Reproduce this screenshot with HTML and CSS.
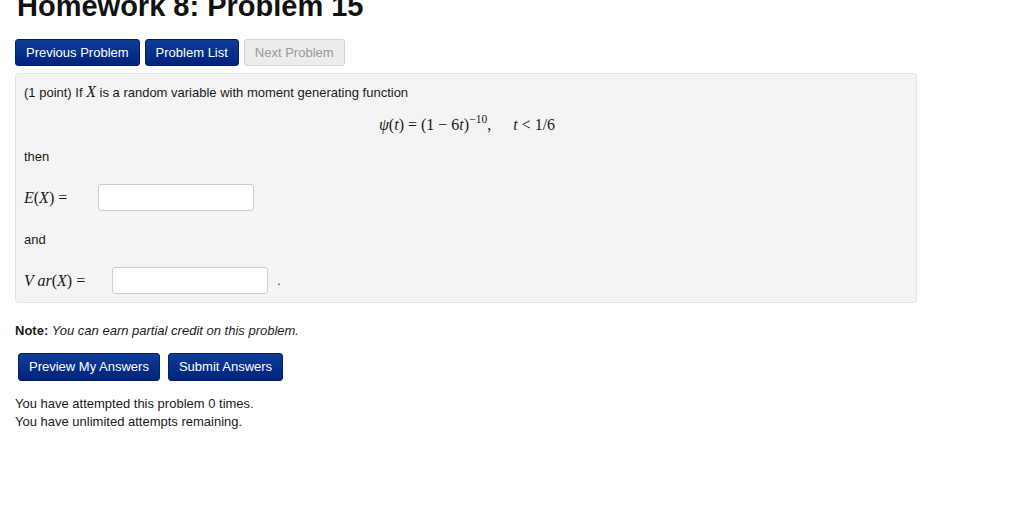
FILE: index.html
```html
<!DOCTYPE html>
<html lang="en">
<head>
<meta charset="utf-8">
<title>Homework 8: Problem 15</title>
<link rel="stylesheet" href="styles.css">
</head>
<body>
<div class="page">
  <h1 class="title">Homework 8: Problem 15</h1>
  <div class="nav">
    <button class="btn btn-primary">Previous Problem</button>
    <button class="btn btn-primary">Problem List</button>
    <button class="btn btn-disabled">Next Problem</button>
  </div>
  <div class="problem">
    <p class="line">(1 point) If <span class="m mi">X</span> is a random variable with moment generating function</p>
    <div class="display m"><span class="mi">ψ</span>(<span class="mi">t</span>)<span class="op">=</span>(1<span class="op">−</span>6<span class="mi">t</span>)<sup>−10</sup>,<span class="sp"></span><span class="mi">t</span><span class="op">&lt;</span>1/6</div>
    <p class="line then">then</p>
    <div class="ans-row">
      <span class="m label label-e"><span class="mi">E</span>(<span class="mi">X</span>)<span class="op">=</span></span>
      <input class="ans" type="text">
    </div>
    <p class="line and">and</p>
    <div class="ans-row">
      <span class="m label label-v"><span class="mi">V ar</span>(<span class="mi">X</span>)<span class="op">=</span></span>
      <input class="ans" type="text">
      <span class="dot">.</span>
    </div>
  </div>
  <p class="note"><b>Note:</b> <i>You can earn partial credit on this problem.</i></p>
  <div class="submit">
    <button class="btn btn-primary btn-lg">Preview My Answers</button>
    <button class="btn btn-primary btn-lg">Submit Answers</button>
  </div>
  <p class="info">You have attempted this problem 0 times.<br>You have unlimited attempts remaining.</p>
</div>
</body>
</html>
```
FILE: styles.css
```css
html, body {
  margin: 0;
  padding: 0;
  background: #fff;
}
body {
  font-family: "Liberation Sans", Arial, Helvetica, sans-serif;
  font-size: 13px;
  color: #1a1a1a;
  overflow: hidden;
}
.page {
  padding-left: 15px;
}
.title {
  margin: -10px 0 0 2px;
  font-size: 29px;
  line-height: 32px;
  font-weight: bold;
  color: #111;
}
.nav {
  display: flex;
  gap: 5px;
  margin-top: 17px;
}
.btn {
  font-family: "Liberation Sans", Arial, Helvetica, sans-serif;
  font-size: 13px;
  height: 27px;
  padding: 0 10px;
  border-radius: 3px;
  border: 1px solid #001e6b;
  line-height: 25px;
  cursor: pointer;
}
.btn-primary {
  color: #fff;
  background: linear-gradient(to bottom, #0d3d98, #00237c);
}
.btn-disabled {
  color: #999;
  background: #ececec;
  border-color: #d4d4d4;
}
.problem {
  margin-top: 7px;
  width: 884px;
  border: 1px solid #e3e3e3;
  border-radius: 3px;
  background: #f4f4f4;
  padding: 9px 8px 8px 8px;
  display: flex;
  flex-direction: column;
}
.line {
  margin: 0;
  line-height: 18px;
}
.m {
  font-family: "Liberation Serif", "Times New Roman", serif;
  font-size: 16px;
}
.mi {
  font-style: italic;
}
.op {
  margin: 0 4px;
}
.display {
  margin-top: 11px;
  text-align: center;
  line-height: 24px;
  padding-left: 2px;
}
.display sup {
  font-size: 11.5px;
  vertical-align: 0;
  position: relative;
  top: -7px;
}
.sp {
  display: inline-block;
  width: 22px;
}
.then {
  margin-top: 10px;
}
.ans-row {
  display: flex;
  align-items: center;
  margin-top: 18px;
  height: 27px;
}
.label {
  flex: none;
}
.label-e {
  width: 74px;
}
.label-v {
  width: 88px;
}
.ans {
  width: 156px;
  height: 27px;
  box-sizing: border-box;
  border: 1px solid #cfcfcf;
  border-radius: 3px;
  background: #fff;
  margin: 0;
  padding: 2px 6px;
}
.dot {
  margin-left: 9px;
  font-size: 13px;
}
.and {
  margin-top: 20px;
}
.note {
  margin: 19px 0 0;
  line-height: 18px;
}
.submit {
  display: flex;
  gap: 8px;
  margin: 13px 0 0 3px;
}
.btn-lg {
  height: 28px;
  line-height: 26px;
}
.info {
  margin: 14px 0 0;
  line-height: 18px;
}
```
